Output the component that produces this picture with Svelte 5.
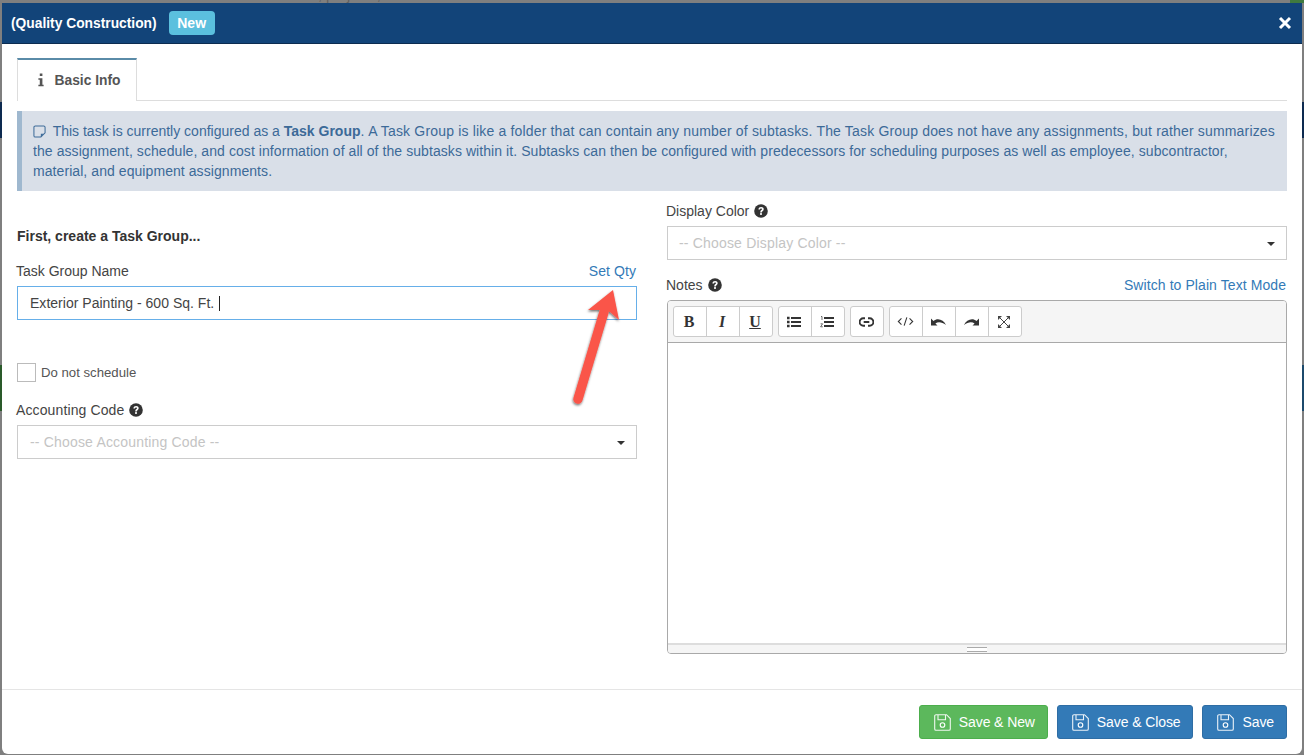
<script>
  const editorGroups = [
    ['bold', 'italic', 'underline'],
    ['ul', 'ol'],
    ['link'],
    ['code', 'undo', 'redo', 'full']
  ];
  const saveButtons = [
    { label: 'Save & New', kind: 'green' },
    { label: 'Save & Close', kind: 'blue' },
    { label: 'Save', kind: 'blue' }
  ];
</script>

{#snippet help()}
  <svg class="help" viewBox="0 0 14 14" width="14" height="14">
    <circle cx="7" cy="7" r="6.800" fill="#333" />
    <path d="M4.400 5.400C4.600 3.800 5.700 3 7.100 3c1.500 0 2.600.9 2.600 2.200 0 1.900-1.900 1.800-1.900 3.200H6.200c0-2.200 1.800-2.100 1.800-3.100 0-.5-.4-.9-1-.9-.6 0-1 .4-1.100 1.100zM6.200 9.100h1.600v1.800H6.200z" fill="#fff" />
  </svg>
{/snippet}

<div class="backdrop">
  <span class="behind-search">Search for clients, projects, and work orders</span>
  <i class="edge navy left-edge"></i>
  <i class="edge green-edge left-edge"></i>
  <i class="edge navy right-edge"></i>
  <i class="edge teal-edge right-edge"></i>
  <i class="corner-green"></i>

  <div class="modal">
    <header class="head">
      <span class="title">(Quality Construction)</span>
      <span class="badge">New</span>
      <svg class="close" viewBox="0 0 14 14" width="14" height="14">
        <path d="M2 2l10 10M12 2L2 12" stroke="#fff" stroke-width="3" fill="none" />
      </svg>
    </header>

    <div class="body">
      <div class="tabs">
        <div class="tab">
          <svg class="info" viewBox="0 0 8 16" width="8" height="14">
            <path d="M2.600 0.500h3v3h-3zM1 6h4.600v7.400H7V15H1v-1.600h1.600V7.600H1z" fill="#555" />
          </svg>
          <span>Basic Info</span>
        </div>
      </div>

      <div class="alert">
        <svg class="note" viewBox="0 0 14 14" width="13" height="13">
          <path d="M2.500 1h9A1.500 1.500 0 0 1 13 2.500V8.500L8.500 13h-6A1.500 1.500 0 0 1 1 11.500v-9A1.500 1.500 0 0 1 2.500 1zM13 8.500c-1 2-3 1.500-4 1.500 0 1 .2 2-.5 3" fill="none" stroke="#3c6a98" stroke-width="1.100" />
        </svg>
        This task is currently configured as a <b>Task Group</b>. <span class="wide">A Task Group is like a folder that can contain any number of subtasks. The Task Group does not have any assignments, but rather summarizes</span> <span class="tail">the assignment, schedule, and cost information of all of the subtasks within it. Subtasks can then be configured with predecessors for scheduling purposes as well as employee, subcontractor, material, and equipment assignments.</span>
      </div>

      <div class="cols">
        <div class="col left">
          <div class="lead">First, create a Task Group...</div>
          <div class="label-row name-label">
            <span>Task Group Name</span>
            <span class="link">Set Qty</span>
          </div>
          <div class="input focus">Exterior Painting - 600 Sq. Ft. <i class="caret"></i></div>
          <div class="check-row">
            <span class="check"></span>
            <span>Do not schedule</span>
          </div>
          <div class="label-row acct">
            <span class="with-help">Accounting Code {@render help()}</span>
          </div>
          <div class="input select">-- Choose Accounting Code --<i class="arrow"></i></div>
        </div>

        <div class="col right">
          <div class="label-row color-label">
            <span class="with-help">Display Color {@render help()}</span>
          </div>
          <div class="input select">-- Choose Display Color --<i class="arrow"></i></div>
          <div class="label-row notes-label">
            <span class="with-help">Notes {@render help()}</span>
            <span class="link">Switch to Plain Text Mode</span>
          </div>
          <div class="editor">
            <div class="toolbar">
              {#each editorGroups as group}
                <div class="btn-group">
                  {#each group as b}
                    <span class="tool">
                      {#if b === 'bold'}
                        <span class="t-b">B</span>
                      {:else if b === 'italic'}
                        <span class="t-i">I</span>
                      {:else if b === 'underline'}
                        <span class="t-u">U</span>
                      {:else if b === 'ul'}
                        <svg viewBox="0 0 14 12" width="14" height="12"><path d="M0 .8h2.600v2.400H0zM0 4.800h2.600v2.400H0zM0 8.800h2.600v2.400H0zM4 1h10v2H4zM4 5h10v2H4zM4 9h10v2H4z" fill="#333" /></svg>
                      {:else if b === 'ol'}
                        <svg viewBox="0 0 14 12" width="14" height="12"><path d="M4 1h10v2H4zM4 5h10v2H4zM4 9h10v2H4z" fill="#333" /><path d="M1 .5h1V4M.6 7.800h2l-2 3h2.200" stroke="#333" stroke-width=".7" fill="none" /></svg>
                      {:else if b === 'link'}
                        <svg viewBox="0 0 14 10" width="15" height="10"><path d="M5.500 1.300H3.800a3.700 3.700 0 0 0 0 7.400h1.700M8.500 1.300h1.700a3.700 3.700 0 0 1 0 7.400H8.500M4.200 5h5.600" stroke="#333" stroke-width="1.900" fill="none" /></svg>
                      {:else if b === 'code'}
                        <svg viewBox="0 0 18 10" width="17" height="9"><path d="M4.500 1.500L1 5l3.500 3.500M13.500 1.500L17 5l-3.500 3.500M10.500.5l-3 9" stroke="#333" stroke-width="1.200" fill="none" /></svg>
                      {:else if b === 'undo'}
                        <svg viewBox="0 0 15 8" width="15" height="8"><path d="M0 .5V7.500H6.500L4.400 5.400C7 3.600 11 3.800 15 7 12.500 1.500 6.500-.6 2.500 3z" fill="#333" /></svg>
                      {:else if b === 'redo'}
                        <svg viewBox="0 0 15 8" width="15" height="8"><path d="M15 .5V7.500H8.500L10.600 5.400C8 3.600 4 3.800 0 7 2.500 1.500 8.500-.6 12.500 3z" fill="#333" /></svg>
                      {:else}
                        <svg viewBox="0 0 12 12" width="12" height="12"><path d="M2 2l8 8M10 2l-8 8" stroke="#444" stroke-width="1" /><path d="M0 0h4L0 4zM12 0H8l4 4zM0 12h4L0 8zM12 12H8l4-4z" fill="#444" /></svg>
                      {/if}
                    </span>
                  {/each}
                </div>
              {/each}
            </div>
            <div class="edit-area"></div>
            <div class="statusbar"><span class="grip"></span></div>
          </div>
        </div>
      </div>
    </div>

    <footer class="foot">
      {#each saveButtons as btn}
        <button class="save {btn.kind}">
          <svg class="disk" viewBox="0 0 17 17" width="17" height="17"><path d="M2 .7h10.500l3.800 3.800V15a1.300 1.300 0 0 1-1.300 1.300H2A1.300 1.300 0 0 1 .7 15V2A1.300 1.300 0 0 1 2 .7zM4 .7v5h7.500v-5" fill="none" stroke="#fff" stroke-width="1.100" opacity=".9" /><circle cx="8.500" cy="11" r="2.300" fill="none" stroke="#fff" stroke-width="1.100" /></svg>
          {btn.label}
        </button>
      {/each}
    </footer>

    <!-- annotation arrow drawn over the form -->
    <svg class="annot" viewBox="0 0 70 130" width="70" height="130">
      <defs>
        <filter id="arrow-shadow" x="-30%" y="-20%" width="160%" height="140%">
          <feDropShadow dx="-0.500" dy="1.500" stdDeviation="1.200" flood-color="#000" flood-opacity=".55" />
        </filter>
      </defs>
      <g filter="url(#arrow-shadow)">
        <path d="M18 119L44 32" stroke="#fa5549" stroke-width="9.500" stroke-linecap="round" fill="none" />
        <path d="M53 10L59 40 50 32 40 30 28 30z" fill="#fa5549" />
      </g>
    </svg>
  </div>
</div>

<style>
  :global(body) {
    margin: 0;
    overflow: hidden;
  }

  .backdrop {
    position: relative;
    width: 1304px;
    height: 755px;
    background: #7f7f7f;
    padding: 3px 2px 1px;
    box-sizing: border-box;
    font-family: "Liberation Sans", Arial, sans-serif;
    font-size: 14px;
    color: #333;
    overflow: hidden;
  }

  .behind-search {
    position: absolute;
    left: 206px;
    top: -13px;
    font-size: 14.500px;
    color: #5f5f5f;
  }

  .edge {
    position: absolute;
    width: 2px;
  }

  .left-edge {
    left: 0;
  }

  .right-edge {
    right: 0;
  }

  .navy {
    top: 102px;
    height: 36px;
    background: #0d2a50;
  }

  .green-edge {
    top: 365px;
    height: 46px;
    background: #2a5a2a;
  }

  .teal-edge {
    top: 365px;
    height: 46px;
    background: #1c4a6c;
  }

  .corner-green {
    position: absolute;
    right: 0;
    top: 0;
    width: 14px;
    height: 3px;
    background: #3f7a3f;
  }

  .modal {
    position: relative;
    height: 751px;
    background: #fff;
    border-radius: 0 0 6px 6px;
    display: flex;
    flex-direction: column;
  }

  .head {
    height: 41px;
    flex: none;
    box-sizing: border-box;
    background: #124479;
    border-bottom: 1px solid #0c2c50;
    display: flex;
    align-items: center;
    padding: 0 10px 0 9px;
    color: #fff;
    font-weight: 700;
  }

  .title {
    font-size: 13.800px;
  }

  .badge {
    margin-left: 12px;
    background: #5bc0de;
    border-radius: 4px;
    height: 24px;
    width: 46px;
    display: flex;
    align-items: center;
    justify-content: center;
    font-size: 14px;
  }

  .close {
    margin-left: auto;
  }

  .body {
    flex: 1;
    padding: 14px 15px 0;
  }

  .tabs {
    height: 43px;
    border-bottom: 1px solid #ddd;
    box-sizing: border-box;
  }

  .tab {
    width: 120px;
    height: 43px;
    box-sizing: border-box;
    border-top: 2px solid #5a8ba8;
    border-right: 1px solid #ddd;
    border-left: 1px solid #ddd;
    background: #fff;
    padding: 0 0 1px 3px;
    display: flex;
    align-items: center;
    justify-content: center;
    gap: 10px;
    font-weight: 700;
    font-size: 13.800px;
    color: #555;
  }

  .alert {
    margin-top: 10px;
    height: 80px;
    box-sizing: border-box;
    background: #d9dfe8;
    border-left: 5px solid #9fb8cf;
    padding: 10px 10px 10px 11px;
    line-height: 20px;
    font-size: 14px;
    color: #3c6a98;
  }

  .wide {
    letter-spacing: .17px;
  }

  .tail {
    letter-spacing: .07px;
  }

  .note {
    margin: 0 3px 0 0;
    vertical-align: -2px;
  }

  .cols {
    display: flex;
    gap: 30px;
  }

  .col {
    width: 620px;
    flex: none;
  }

  .lead {
    margin-top: 37px;
    font-weight: 700;
    font-size: 14px;
    line-height: 16px;
  }

  .label-row {
    display: flex;
    justify-content: space-between;
    align-items: center;
    height: 20px;
    margin-left: -1px;
    margin-right: 1px;
    font-size: 14px;
    color: #444;
  }

  .name-label {
    margin-top: 17px;
    margin-bottom: 5px;
  }

  .acct {
    margin-top: 18px;
    margin-bottom: 5px;
    letter-spacing: .12px;
  }

  .link {
    color: #337ab7;
    font-size: 14px;
    letter-spacing: .08px;
  }

  .with-help {
    display: flex;
    align-items: center;
    gap: 5px;
  }

  .help {
    flex: none;
  }

  .input {
    position: relative;
    height: 34px;
    box-sizing: border-box;
    border: 1px solid #ccc;
    padding: 0 12px 0 11px;
    line-height: 32px;
    font-size: 14px;
    color: #c4c4c4;
    background: #fff;
  }

  .left .input {
    padding-left: 12px;
  }

  .input.select {
    letter-spacing: .18px;
  }

  .input.focus {
    border-color: #66afe9;
    color: #444;
    letter-spacing: .02px;
  }

  .caret {
    display: inline-block;
    width: 1px;
    height: 15px;
    background: #222;
    vertical-align: -3px;
    margin-left: 1px;
  }

  .arrow {
    position: absolute;
    right: 11px;
    top: 15px;
    border-top: 4px solid #333;
    border-left: 4px solid transparent;
    border-right: 4px solid transparent;
  }

  .check-row {
    margin-top: 43px;
    display: flex;
    align-items: center;
    gap: 5px;
    font-size: 13.200px;
    color: #555;
    line-height: 19px;
  }

  .check {
    width: 19px;
    height: 19px;
    box-sizing: border-box;
    border: 1px solid #bbb;
    background: #fff;
  }

  .color-label {
    margin-top: 10px;
    margin-bottom: 5px;
  }

  .notes-label {
    margin-top: 15px;
    margin-bottom: 5px;
  }

  .editor {
    border: 1px solid #a9a9a9;
    border-radius: 4px;
    height: 354px;
    box-sizing: border-box;
    display: flex;
    flex-direction: column;
    overflow: hidden;
  }

  .toolbar {
    height: 42px;
    flex: none;
    box-sizing: border-box;
    background: #f5f5f5;
    border-bottom: 1px solid #a9a9a9;
    padding: 5px 0 0 5px;
    display: flex;
    gap: 5px;
  }

  .btn-group {
    display: flex;
    height: 31px;
    border: 1px solid #ccc;
    border-radius: 3px;
    background: #fff;
    box-sizing: border-box;
  }

  .tool {
    width: 33px;
    padding-right: 2px;
    display: flex;
    align-items: center;
    justify-content: center;
    border-left: 1px solid #ccc;
    font-family: "Liberation Serif", serif;
    font-size: 16px;
    color: #333;
    box-sizing: border-box;
  }

  .tool:first-child {
    border-left: 0;
    width: 32px;
  }

  .t-b {
    font-weight: 700;
  }

  .t-i {
    font-weight: 700;
    font-style: italic;
  }

  .t-u {
    font-weight: 700;
    text-decoration: underline;
  }

  .edit-area {
    flex: 1;
    background: #fff;
  }

  .statusbar {
    height: 10px;
    flex: none;
    box-sizing: border-box;
    background: #f5f5f5;
    border-top: 2px solid #ddd;
    display: flex;
    justify-content: center;
    align-items: center;
  }

  .grip {
    width: 20px;
    height: 5px;
    box-sizing: border-box;
    border-top: 1px solid #aaa;
    border-bottom: 1px solid #aaa;
    background: linear-gradient(#fff 0 0);
  }

  .foot {
    height: 65px;
    flex: none;
    border-top: 1px solid #e5e5e5;
    box-sizing: border-box;
    padding: 15px 15px 0;
    display: flex;
    justify-content: flex-end;
    gap: 9px;
  }

  .save {
    height: 34px;
    border: 1px solid;
    border-radius: 3px;
    padding: 0 12px 0 14px;
    display: flex;
    align-items: center;
    gap: 8px;
    font-family: inherit;
    font-size: 14px;
    letter-spacing: -.1px;
    color: #fff;
  }

  .green {
    background: #5cb85c;
    border-color: #4cae4c;
  }

  .blue {
    background: #337ab7;
    border-color: #2e6da4;
  }

  .annot {
    position: absolute;
    left: 558px;
    top: 277px;
    pointer-events: none;
  }
</style>
